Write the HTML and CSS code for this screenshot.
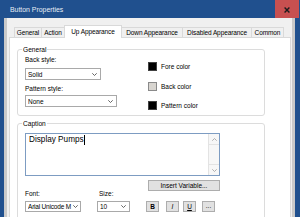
FILE: index.html
```html
<!DOCTYPE html>
<html>
<head>
<meta charset="utf-8">
<title>Button Properties</title>
<link rel="stylesheet" href="styles.css">
</head>
<body>
<div class="window">
  <div class="titlebar">
    <span class="title">Button Properties</span>
    <div class="close"><svg width="6" height="6" viewBox="0 0 6 6"><path d="M0.6 0.6L5.4 5.4M5.4 0.6L0.6 5.4" stroke="#1b1b1b" stroke-width="1.4" fill="none"/></svg></div>
  </div>
  <div class="frame">
    <div class="tabs">
      <div class="tab t-general">General</div>
      <div class="tab t-action">Action</div>
      <div class="tab active t-up">Up Appearance</div>
      <div class="tab t-down">Down Appearance</div>
      <div class="tab t-disabled">Disabled Appearance</div>
      <div class="tab t-common">Common</div>
    </div>
    <div class="pane">
      <fieldset class="group general">
        <legend>General</legend>
        <div class="gen-body">
          <div class="gen-left">
            <div class="label l-back">Back style:</div>
            <div class="combo c-solid"><span class="combo-text">Solid</span><svg class="chev" width="5" height="3" viewBox="0 0 5 3"><path d="M0.3 0.3L2.5 2.5L4.7 0.3" stroke="#555" stroke-width="0.9" fill="none"/></svg></div>
            <div class="label l-pattern">Pattern style:</div>
            <div class="combo c-none"><span class="combo-text">None</span><svg class="chev" width="5" height="3" viewBox="0 0 5 3"><path d="M0.3 0.3L2.5 2.5L4.7 0.3" stroke="#555" stroke-width="0.9" fill="none"/></svg></div>
          </div>
          <div class="gen-right">
            <div class="color-row r-fore"><span class="swatch sw-black"></span><span class="color-label">Fore color</span></div>
            <div class="color-row r-back"><span class="swatch sw-grey"></span><span class="color-label">Back color</span></div>
            <div class="color-row r-pattern"><span class="swatch sw-black"></span><span class="color-label">Pattern color</span></div>
          </div>
        </div>
      </fieldset>
      <fieldset class="group caption">
        <legend>Caption</legend>
        <div class="cap-body">
          <div class="textbox">
            <div class="textbox-text">Display Pumps<span class="caret"></span></div>
            <div class="vscroll">
              <div class="sb-btn sb-up"><svg width="5" height="3" viewBox="0 0 5 3"><path d="M0.3 2.7L2.5 0.5L4.7 2.7" stroke="#a6a6a6" stroke-width="0.9" fill="none"/></svg></div>
              <div class="sb-track"></div>
              <div class="sb-btn sb-down"><svg width="5" height="3" viewBox="0 0 5 3"><path d="M0.3 0.3L2.5 2.5L4.7 0.3" stroke="#a6a6a6" stroke-width="0.9" fill="none"/></svg></div>
            </div>
          </div>
          <div class="bottom">
            <div class="field f-font">
              <div class="label">Font:</div>
              <div class="combo c-font"><span class="combo-text">Arial Unicode M</span><svg class="chev" width="5" height="3" viewBox="0 0 5 3"><path d="M0.3 0.3L2.5 2.5L4.7 0.3" stroke="#555" stroke-width="0.9" fill="none"/></svg></div>
            </div>
            <div class="field f-size">
              <div class="label l-size">Size:</div>
              <div class="combo c-size"><span class="combo-text">10</span><svg class="chev" width="5" height="3" viewBox="0 0 5 3"><path d="M0.3 0.3L2.5 2.5L4.7 0.3" stroke="#555" stroke-width="0.9" fill="none"/></svg></div>
            </div>
            <div class="right-tools">
              <div class="btn insert">Insert Variable...</div>
              <div class="fmt-row">
                <div class="btn fmt fmt-b">B</div>
                <div class="btn fmt fmt-i">I</div>
                <div class="btn fmt fmt-u">U</div>
                <div class="btn fmt fmt-more">...</div>
              </div>
            </div>
          </div>
        </div>
      </fieldset>
    </div>
  </div>
</div>
</body>
</html>
```

FILE: styles.css
```css
* { box-sizing: border-box; }
html, body { margin: 0; padding: 0; }
body {
  width: 300px;
  height: 217px;
  overflow: hidden;
  font-family: "Liberation Sans", Arial, sans-serif;
  font-size: 6.5px;
  color: #000;
}
.window {
  width: 300px;
  height: 217px;
  background: #20508e;
  display: flex;
  flex-direction: column;
  overflow: hidden;
}
.titlebar {
  flex: none;
  height: 18px;
  display: flex;
  align-items: center;
}
.title {
  color: #e6ecf4;
  margin-left: 10px;
  margin-top: 2px;
  font-size: 6.9px;
  line-height: 8px;
}
.close {
  margin-left: auto;
  margin-right: 1px;
  width: 24px;
  height: 18px;
  background: #c75050;
  display: flex;
  align-items: center;
  justify-content: center;
  padding-top: 2px;
}
.frame {
  flex: none;
  height: 240px;
  margin: 0 5px 0 4px;
  background: #f0f0f0;
  border-left: 3px solid #c9c9c9;
  border-right: 3px solid #c9c9c9;
  padding: 7px 1px 0 2px;
  display: flex;
  flex-direction: column;
}
.tabs {
  flex: none;
  height: 13px;
  display: flex;
  align-items: flex-end;
  padding-left: 5px;
}
.tab {
  height: 10px;
  margin-bottom: 1px;
  margin-left: -1px;
  border: 1px solid #d9d9d9;
  border-bottom: none;
  background: #f0f0f0;
  text-align: center;
  line-height: 9px;
  white-space: nowrap;
  overflow: hidden;
  letter-spacing: -0.1px;
}
.t-general { margin-left: 0; width: 28px; }
.t-action { width: 24px; }
.t-up { width: 58px; }
.t-down { width: 62px; }
.t-disabled { width: 70px; }
.t-common { width: 33px; }
.tab.active {
  height: 13px;
  margin-bottom: 0;
  background: #fff;
  padding-top: 1px;
  position: relative;
  z-index: 1;
}
.pane {
  flex: 1;
  margin-top: -1px;
  background: #fff;
  border: 1px solid #d9d9d9;
  display: flex;
  flex-direction: column;
}
.group {
  margin: 0 25px 0 7px;
  padding: 0;
  border: 1px solid #dcdcdc;
  border-radius: 3px;
  min-width: 0;
}
.group legend {
  margin-left: 4px;
  padding: 0 1px;
  line-height: 9px;
  font-size: 6.6px;
}
.general { margin-top: 7px; }
.caption { margin-top: 3px; }
.gen-body {
  display: flex;
  padding: 2px 0 5px 7px;
}
.gen-left {
  width: 92px;
  display: flex;
  flex-direction: column;
  align-items: flex-start;
}
.label {
  line-height: 8px;
  white-space: nowrap;
}
.combo {
  height: 12px;
  border: 1px solid #a9a9a9;
  background: #fff;
  display: flex;
  align-items: center;
  padding-left: 2px;
  overflow: hidden;
}
.combo-text {
  flex: 1;
  min-width: 0;
  overflow: hidden;
  white-space: nowrap;
  line-height: 9px;
}
.chev { flex: none; margin: 0 3px 0 2px; }
.c-solid { width: 76px; margin-top: 4px; }
.l-pattern { margin-top: 5px; }
.c-none { width: 92px; margin-top: 2px; }
.gen-right {
  margin-left: 31px;
  display: flex;
  flex-direction: column;
}
.color-row {
  height: 9px;
  display: flex;
  align-items: center;
}
.r-fore { margin-top: 6px; }
.r-back { margin-top: 11px; }
.r-pattern { margin-top: 10px; }
.swatch {
  width: 9px;
  height: 9px;
  border: 1px solid #404040;
  margin-right: 4px;
}
.sw-black { background: #000; }
.sw-grey { background: #d8d5d0; border-color: #8a8a8a; }
.color-label { line-height: 8px; white-space: nowrap; }
.cap-body {
  padding: 5px 0 16px 7px;
}
.textbox {
  width: 195px;
  height: 43px;
  border: 1px solid #7d9cc2;
  display: flex;
  background: #fff;
}
.textbox-text {
  flex: 1;
  padding: 1px 0 0 3px;
  font-size: 8.2px;
  line-height: 10px;
  white-space: nowrap;
}
.caret {
  display: inline-block;
  width: 1px;
  height: 10px;
  background: #000;
  vertical-align: top;
  margin-left: 0.5px;
}
.vscroll {
  width: 11px;
  display: flex;
  flex-direction: column;
  background: #f7f7f7;
  border-left: 1px solid #e3e3e3;
}
.sb-btn {
  height: 11px;
  display: flex;
  align-items: center;
  justify-content: center;
}
.sb-up { border-bottom: 1px solid #e3e3e3; }
.sb-down { border-top: 1px solid #e3e3e3; }
.sb-track { flex: 1; }
.bottom {
  margin-top: 4px;
  display: flex;
  align-items: flex-start;
}
.field {
  display: flex;
  flex-direction: column;
  padding-top: 10px;
}
.field .combo { height: 11px; margin-top: 3px; }
.c-font .combo-text { letter-spacing: -0.2px; }
.c-font .chev { margin-left: 1px; margin-right: 2px; }
.f-font { width: 56px; }
.f-size { width: 33px; margin-left: 16px; }
.l-size { padding-left: 2px; }
.right-tools {
  margin-left: 16px;
  display: flex;
  flex-direction: column;
}
.btn {
  height: 11px;
  background: #e1e1e1;
  border: 1px solid #adadad;
  text-align: center;
  line-height: 9px;
  white-space: nowrap;
}
.insert { width: 72px; margin-left: 2px; }
.fmt-row {
  display: flex;
  margin-top: 10px;
}
.fmt { width: 13px; }
.fmt-b { font-weight: bold; }
.fmt-i { font-style: italic; margin-left: 7px; }
.fmt-u { text-decoration: underline; margin-left: 4px; }
.fmt-more { margin-left: 6px; line-height: 8px; }
```
